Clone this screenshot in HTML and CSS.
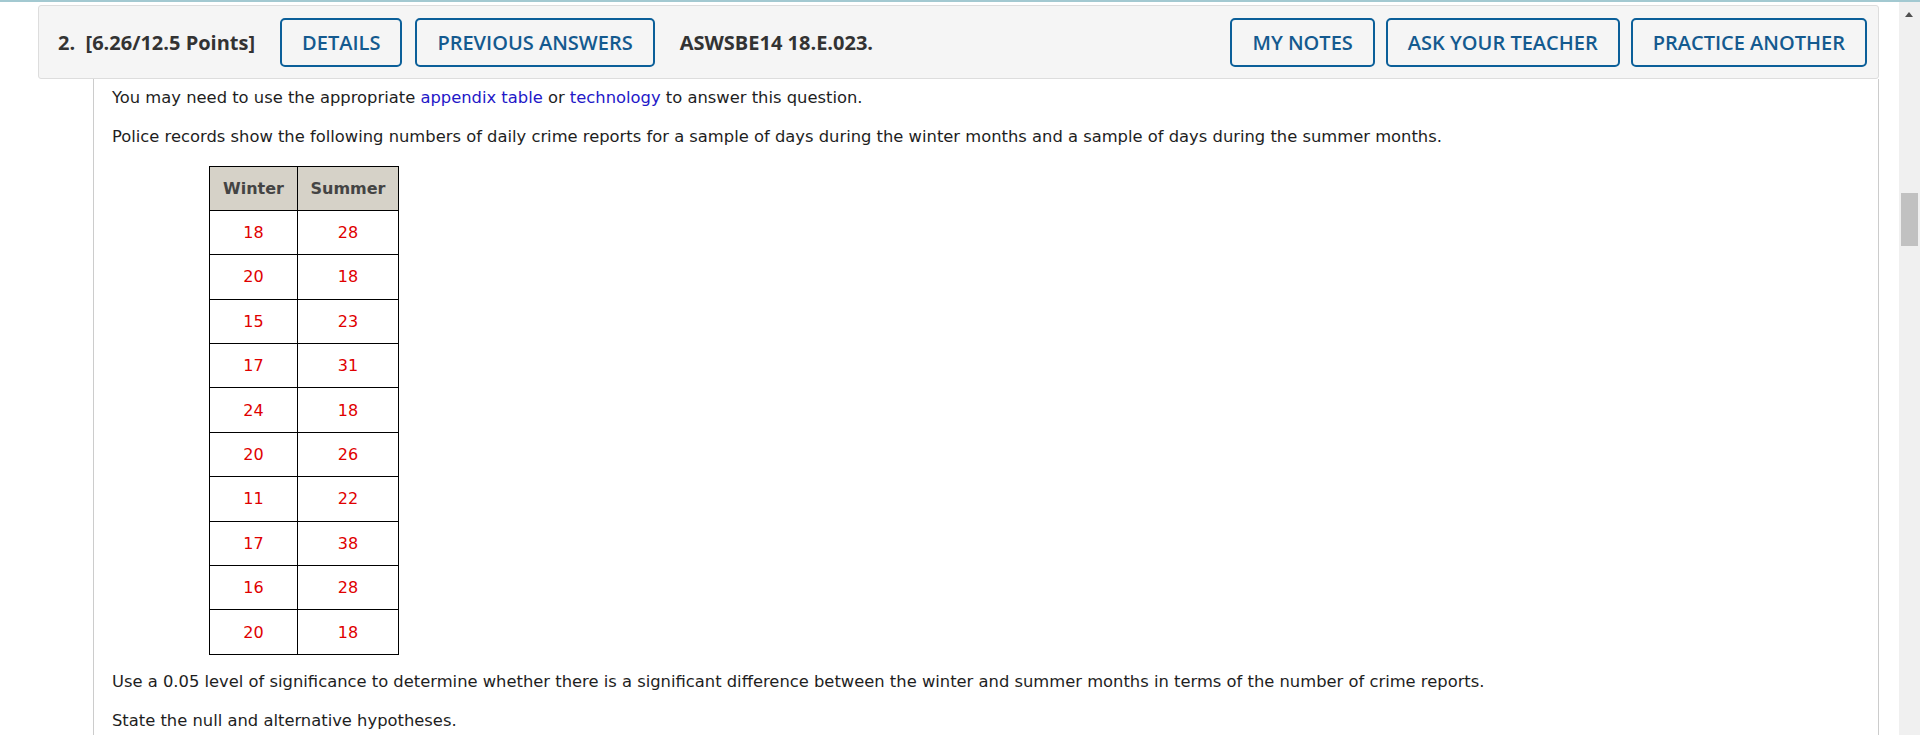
FILE: index.html
```html
<!DOCTYPE html>
<html>
<head>
<meta charset="utf-8">
<link rel="stylesheet" href="styles.css">
</head>
<body>
<div class="topline"></div>
<div class="frame">
  <main class="main">
    <div class="qhead">
      <span class="qtitle">2.&nbsp; [6.26/12.5 Points]</span>
      <button class="btn btn-details">DETAILS</button>
      <button class="btn btn-prev">PREVIOUS ANSWERS</button>
      <span class="qcode">ASWSBE14 18.E.023.</span>
      <div class="right-actions">
        <button class="btn">MY NOTES</button>
        <button class="btn">ASK YOUR TEACHER</button>
        <button class="btn">PRACTICE ANOTHER</button>
      </div>
    </div>
    <div class="qbody">
      <p>You may need to use the appropriate <a href="#">appendix table</a> or <a href="#">technology</a> to answer this question.</p>
      <p>Police records show the following numbers of daily crime reports for a sample of days during the winter months and a sample of days during the summer months.</p>
      <table class="data">
        <thead>
          <tr><th class="c1">Winter</th><th class="c2">Summer</th></tr>
        </thead>
        <tbody>
          <tr><td>18</td><td>28</td></tr>
          <tr><td>20</td><td>18</td></tr>
          <tr><td>15</td><td>23</td></tr>
          <tr><td>17</td><td>31</td></tr>
          <tr><td>24</td><td>18</td></tr>
          <tr><td>20</td><td>26</td></tr>
          <tr><td>11</td><td>22</td></tr>
          <tr><td>17</td><td>38</td></tr>
          <tr><td>16</td><td>28</td></tr>
          <tr><td>20</td><td>18</td></tr>
        </tbody>
      </table>
      <p class="after-table">Use a 0.05 level of significance to determine whether there is a significant difference between the winter and summer months in terms of the number of crime reports.</p>
      <p>State the null and alternative hypotheses.</p>
    </div>
  </main>
  <div class="scrollbar">
    <div class="sb-arrow"></div>
    <div class="sb-thumb"></div>
  </div>
</div>
</body>
</html>
```
FILE: styles.css
```css
html, body {
  margin: 0;
  padding: 0;
  background: #fff;
  overflow: hidden;
  height: 735px;
}

.topline {
  height: 2px;
  background: #a3c9d1;
}

.frame {
  display: flex;
  height: 733px;
}

.main {
  flex: 1;
  padding: 3px 20px 0 38px;
  display: flex;
  flex-direction: column;
  min-width: 0;
}

.qhead {
  flex: none;
  box-sizing: border-box;
  height: 74px;
  display: flex;
  align-items: center;
  padding: 0 11px 0 19px;
  background: #f5f5f5;
  border: 1px solid #dddddd;
  border-radius: 3px;
  font-family: "Open Sans", "Liberation Sans", sans-serif;
}

.qtitle {
  font-weight: 700;
  font-size: 20px;
  color: #333;
  margin-right: 25px;
  white-space: pre;
}

.qcode {
  font-weight: 700;
  font-size: 20px;
  color: #333;
  margin-left: 25px;
}

.btn {
  box-sizing: border-box;
  height: 49px;
  padding: 0 20px;
  border: 2px solid #0b5f99;
  border-radius: 5px;
  background: transparent;
  color: #145a8f;
  font-family: "Open Sans", "Liberation Sans", sans-serif;
  font-size: 20px;
  font-weight: 600;
  line-height: 45px;
  white-space: nowrap;
}

.btn-prev {
  margin-left: 13px;
}

.right-actions {
  margin-left: auto;
  display: flex;
  gap: 11px;
}

.qbody {
  flex: 1;
  margin-left: 55px;
  border-left: 1px solid #cccccc;
  border-right: 1px solid #cccccc;
  padding: 8.5px 18px 0 18px;
  font-family: "DejaVu Sans", Verdana, sans-serif;
  font-size: 16.35px;
  color: #1e1e1e;
}

.qbody p {
  margin: 0 0 19px 0;
  line-height: 20px;
}

.qbody a {
  color: #2318c8;
  text-decoration: none;
}

.data {
  border-collapse: collapse;
  margin: 0 0 17px 97px;
  font-size: 16px;
}

.data th,
.data td {
  border: 1.5px solid #000;
  text-align: center;
  height: 44.4px;
  padding: 0;
  box-sizing: border-box;
}

.data th {
  background: #d6d2c8;
  color: #444;
  font-weight: 700;
}

.data .c1 { width: 88px; }
.data .c2 { width: 101px; }

.data td {
  color: #e00000;
}

.scrollbar {
  width: 21px;
  background: #f0f0f0;
  position: relative;
  flex: none;
}

.sb-arrow {
  position: absolute;
  top: 10px;
  left: 6px;
  width: 0;
  height: 0;
  border-left: 4px solid transparent;
  border-right: 4px solid transparent;
  border-bottom: 5px solid #505050;
}

.sb-thumb {
  position: absolute;
  top: 191px;
  left: 2px;
  width: 17px;
  height: 53px;
  background: #c1c1c1;
}
```
